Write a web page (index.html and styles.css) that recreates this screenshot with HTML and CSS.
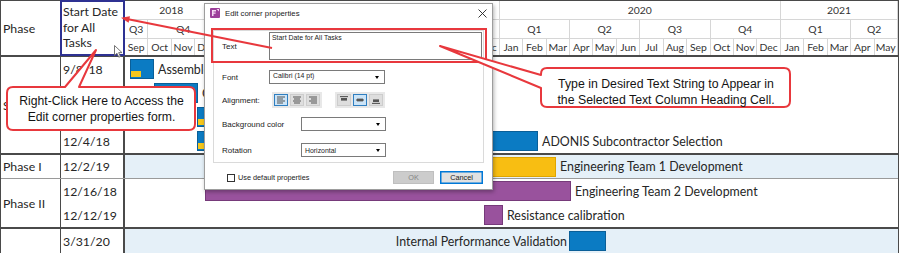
FILE: index.html
```html
<!DOCTYPE html>
<html>
<head>
<meta charset="utf-8">
<title>Edit corner properties</title>
<link rel="stylesheet" href="styles.css">
</head>
<body>
<div class="stage">
  <div class="chart">
    <div class="row head">
      <div class="cphase hphase">Phase</div>
      <div class="cdate hdate">Start Date<br>for All<br>Tasks</div>
      <div class="tlhead">
        <div class="yr s4">2018</div><div class="yr s12">2019</div><div class="yr s12">2020</div><div class="yr s5">2021</div>
        <div class="qt s1">Q3</div><div class="qt s3">Q4</div>
        <div class="qt s3">Q1</div><div class="qt s3">Q2</div><div class="qt s3">Q3</div><div class="qt s3">Q4</div>
        <div class="qt s3">Q1</div><div class="qt s3">Q2</div><div class="qt s3">Q3</div><div class="qt s3">Q4</div>
        <div class="qt s3">Q1</div><div class="qt s2">Q2</div>
        <div class="mo">Sep</div><div class="mo">Oct</div><div class="mo">Nov</div><div class="mo">Dec</div>
        <div class="mo">Jan</div><div class="mo">Feb</div><div class="mo">Mar</div><div class="mo">Apr</div><div class="mo">May</div><div class="mo">Jun</div>
        <div class="mo">Jul</div><div class="mo">Aug</div><div class="mo">Sep</div><div class="mo">Oct</div><div class="mo">Nov</div><div class="mo">Dec</div>
        <div class="mo">Jan</div><div class="mo">Feb</div><div class="mo">Mar</div><div class="mo">Apr</div><div class="mo">May</div><div class="mo">Jun</div>
        <div class="mo">Jul</div><div class="mo">Aug</div><div class="mo">Sep</div><div class="mo">Oct</div><div class="mo">Nov</div><div class="mo">Dec</div>
        <div class="mo">Jan</div><div class="mo">Feb</div><div class="mo">Mar</div><div class="mo">Apr</div><div class="mo">May</div>
      </div>
    </div>

    <div class="row grp g1">
      <div class="cphase">Startup</div>
      <div class="cdate">
        <div class="d">9/8/18</div><div class="d">10/1/18</div><div class="d">12/3/18</div><div class="d">12/4/18</div>
      </div>
      <div class="tl">
        <div class="sub"><div class="bar blue" style="margin-left:5px;width:24px"><div class="prog" style="width:10px"></div></div><span class="lab">Assemble Engineering Team</span></div>
        <div class="sub"><div class="bar blue" style="margin-left:29px;width:44px"><div class="prog" style="width:12px"></div></div><span class="lab">Concept Design Review</span></div>
        <div class="sub"><div class="bar blue" style="margin-left:72px;width:120px"><div class="prog" style="width:60px"></div></div><span class="lab">Requirements Review</span></div>
        <div class="sub"><div class="bar blue" style="margin-left:72px;width:341px"><div class="prog" style="width:80px"></div></div><span class="lab">ADONIS Subcontractor Selection</span></div>
      </div>
    </div>

    <div class="row grp g2">
      <div class="cphase">Phase I</div>
      <div class="cdate"><div class="d d23">12/2/19</div></div>
      <div class="tl shade">
        <div class="sub s23"><div class="bar yellow" style="margin-left:175px;width:256px"></div><span class="lab">Engineering Team 1 Development</span></div>
      </div>
    </div>

    <div class="row grp g3">
      <div class="cphase">Phase II</div>
      <div class="cdate"><div class="d">12/16/18</div><div class="d">12/12/19</div></div>
      <div class="tl">
        <div class="sub"><div class="bar purple" style="margin-left:80px;width:366px"></div><span class="lab">Engineering Team 2 Development</span></div>
        <div class="sub"><div class="bar purple" style="margin-left:359px;width:19px"></div><span class="lab">Resistance calibration</span></div>
      </div>
    </div>

    <div class="row grp g4">
      <div class="cphase"></div>
      <div class="cdate"><div class="d">3/31/20</div></div>
      <div class="tl shade">
        <div class="sub"><div class="lead" style="width:444px">Internal Performance Validation</div><div class="bar blue" style="width:37px"></div></div>
      </div>
    </div>
  </div>

  <div class="dialog">
    <div class="titlebar">
      <svg class="app-icon" viewBox="0 0 10 10" width="10" height="10"><rect x="0" y="0" width="10" height="10" rx="1" fill="#9c3f9a"/><path d="M2 2 H6 V3.4 H3.5 V4.4 H5.6 V5.7 H3.5 V8 H2 Z" fill="#f4d9f2"/><path d="M6.5 1 L9 1 L9 3.5 Z" fill="#f4d9f2"/></svg>
      <span class="title">Edit corner properties</span>
      <svg class="close" viewBox="0 0 9 9" width="9" height="9"><path d="M0.5 0.5 L8.5 8.5 M8.5 0.5 L0.5 8.5" stroke="#222" stroke-width="0.9"/></svg>
    </div>
    <div class="groupbox">
      <div class="frow">
        <div class="flabel">Text</div>
        <div class="textarea">Start Date for All Tasks</div>
      </div>
      <div class="frow r-font">
        <div class="flabel">Font</div>
        <div class="combo wide"><span class="ctext top">Calibri (14 pt)</span><span class="arrow"></span></div>
      </div>
      <div class="frow r-align">
        <div class="flabel">Alignment:</div>
        <div class="align">
          <div class="agroup">
            <div class="abtn sel"><svg viewBox="0 0 8 8" width="8" height="8"><path d="M0 1H8M0 3H6M0 5H8M0 7H6" stroke="#555" stroke-width="1.2"/></svg></div>
            <div class="abtn"><svg viewBox="0 0 8 8" width="8" height="8"><path d="M0 1H8M1 3H7M0 5H8M1 7H7" stroke="#555" stroke-width="1.2"/></svg></div>
            <div class="abtn"><svg viewBox="0 0 8 8" width="8" height="8"><path d="M0 1H8M2 3H8M0 5H8M2 7H8" stroke="#555" stroke-width="1.2"/></svg></div>
          </div>
          <div class="agroup">
            <div class="abtn"><svg viewBox="0 0 8 8" width="8" height="8"><path d="M0 0.6H8" stroke="#555" stroke-width="1.1"/><rect x="1" y="2" width="6" height="2.6" fill="#555"/></svg></div>
            <div class="abtn sel"><svg viewBox="0 0 8 8" width="8" height="8"><path d="M0 4H8" stroke="#555" stroke-width="1.1"/><rect x="1" y="2.6" width="6" height="2.8" fill="#555"/></svg></div>
            <div class="abtn"><svg viewBox="0 0 8 8" width="8" height="8"><path d="M0 7.4H8" stroke="#555" stroke-width="1.1"/><rect x="1" y="3.4" width="6" height="2.6" fill="#555"/></svg></div>
          </div>
        </div>
      </div>
      <div class="frow r-bg">
        <div class="flabel">Background color</div>
        <div class="combo narrow"><span class="ctext"></span><span class="arrow"></span></div>
      </div>
      <div class="frow r-rot">
        <div class="flabel">Rotation</div>
        <div class="combo narrow"><span class="ctext">Horizontal</span><span class="arrow"></span></div>
      </div>
    </div>
    <div class="footer">
      <span class="chk"></span>
      <span class="chk-label">Use default properties</span>
      <div class="btn ok">OK</div>
      <div class="btn cancel">Cancel</div>
    </div>
  </div>

  <svg class="overlay" width="900" height="253" viewBox="0 0 900 253">
    <rect x="212" y="29" width="274" height="33" fill="none" stroke="#e8383d" stroke-width="2"/>
    <line x1="127" y1="19" x2="272" y2="48" stroke="#e8383d" stroke-width="2"/>
    <polygon points="121,17.8 130,16.2 128.6,22.8" fill="#e8383d"/>
    <path d="M13 87 L65 87 L96 50 L79 87 L189 87 Q195 87 195 93 L195 124 Q195 130 189 130 L13 130 Q7 130 7 124 L7 93 Q7 87 13 87 Z" fill="#fff" stroke="#e8383d" stroke-width="2" stroke-linejoin="round"/>
    <path d="M547 68 L784 68 Q790 68 790 74 L790 101 Q790 107 784 107 L547 107 Q541 107 541 101 L541 88 L440 46 L541 75 L541 74 Q541 68 547 68 Z" fill="#fff" stroke="#e8383d" stroke-width="2" stroke-linejoin="round"/>
  </svg>
  <div class="ctext1">Right-Click Here to Access the<br>Edit corner properties form.</div>
  <div class="ctext2">Type in Desired Text String to Appear in<br>the Selected Text Column Heading Cell.</div>
  <svg class="cursor" viewBox="0 0 9 13" width="9" height="13"><path d="M0.5 0.5 L0.5 10.5 L3 8.2 L4.8 12.2 L6.4 11.5 L4.7 7.6 L8 7.6 Z" fill="#fff" stroke="#666" stroke-width="0.9" stroke-linejoin="round"/></svg>
</div>
</body>
</html>
```

FILE: styles.css
```css
* { box-sizing: border-box; }
html, body { margin: 0; padding: 0; }
body {
  width: 900px;
  height: 253px;
  overflow: hidden;
  background: #fff;
  font-family: "Lato", "Liberation Sans", sans-serif;
  color: #262626;
}
.stage {
  position: relative;
  width: 900px;
  height: 253px;
  overflow: hidden;
}

/* ---------- chart ---------- */
.chart {
  width: 899px;
  height: 253px;
  border: 1px solid #4a4a4a;
  border-bottom: 0;
}
.row {
  display: grid;
  grid-template-columns: 60px 64px 773px;
}
.cphase {
  border-right: 1px solid #4a4a4a;
  display: flex;
  align-items: center;
  padding-left: 2px;
  font-size: 12.3px;
  white-space: nowrap;
  overflow: hidden;
}
.cdate {
  border-right: 2px solid #4a4a4a;
  font-size: 12.3px;
}
.head {
  height: 56px;
  border-bottom: 2px solid #4a4a4a;
}
.hdate {
  position: relative;
  padding: 3px 0 0 2px;
  line-height: 15.5px;
}
.hdate::after {
  content: "";
  position: absolute;
  top: -1px;
  left: -1px;
  right: -2px;
  bottom: -1px;
  border: 2px solid #2e3192;
}
.tlhead {
  display: grid;
  grid-template-columns: repeat(33, 1fr);
  grid-template-rows: 19px 19px 16px;
  font-size: 10.4px;
  color: #333;
}
.yr, .qt, .mo {
  display: flex;
  align-items: center;
  justify-content: center;
  border-right: 1px solid #d6d6d6;
  white-space: nowrap;
  overflow: hidden;
}
.yr, .qt { border-bottom: 1px solid #d6d6d6; }
.s1 { grid-column: span 1; }
.s2 { grid-column: span 2; }
.s3 { grid-column: span 3; }
.s4 { grid-column: span 4; }
.s5 { grid-column: span 5; }
.s12 { grid-column: span 12; }

.grp { border-bottom: 2px solid #4a4a4a; }
.g2 { border-bottom: 1px solid #9a9a9a; }
.g4 { border-bottom: 0; height: 25px; }
.d {
  height: 24px;
  display: flex;
  align-items: center;
  padding-left: 2px;
}
.d23 { height: 23px; }
.tl { overflow: hidden; }
.shade { background: #e5f0f8; }
.sub {
  height: 24px;
  display: flex;
  align-items: center;
  white-space: nowrap;
  font-size: 12.4px;
}
.s23 { height: 23px; }
.bar {
  flex: none;
  height: 20px;
  border: 1px solid;
  display: flex;
  align-items: flex-end;
  padding: 0 0 1px 0;
}
.blue { background: #0b7bc3; border-color: #0a5f98; }
.yellow { background: #f8be12; border-color: #dfa500; }
.purple { background: #99529d; border-color: #763a7a; }
.prog {
  height: 6px;
  background: #f7c71c;
}
.lab { margin-left: 4px; }
.lead {
  flex: none;
  text-align: right;
  padding-right: 2px;
}

/* ---------- dialog ---------- */
.dialog {
  position: absolute;
  left: 204px;
  top: 3px;
  width: 289px;
  height: 187px;
  background: #fff;
  border: 1px solid #9d9d9d;
  box-shadow: 1px 2px 4px rgba(0, 0, 0, 0.3);
  font-family: "Liberation Sans", Arial, sans-serif;
  color: #1b1b1b;
}
.titlebar {
  height: 18px;
  display: flex;
  align-items: center;
  padding-left: 5px;
}
.app-icon { flex: none; margin-right: 5px; }
.title { flex: 1; font-size: 7.8px; }
.close { flex: none; margin-right: 5px; }
.groupbox {
  margin: 8px 8px 0 8px;
  height: 133px;
  border: 1px solid #dadada;
  padding: 1px 1px 0 8px;
}
.frow {
  display: flex;
  align-items: center;
}
.flabel {
  flex: none;
  width: 47px;
  white-space: nowrap;
  font-size: 8px;
}
.textarea {
  width: 213px;
  height: 28px;
  border: 1px solid #7a7a7a;
  font-size: 6.9px;
  padding: 1px 2px;
}
.r-font { margin-top: 10px; }
.r-align { margin-top: 8px; }
.r-bg { margin-top: 9px; }
.r-rot { margin-top: 12px; }
.combo {
  height: 14px;
  border: 1px solid #7a7a7a;
  display: flex;
  align-items: center;
  padding-left: 3px;
  font-size: 6.9px;
}
.combo.wide { width: 116px; }
.combo.narrow { width: 85px; margin-left: 32px; }
.ctext.top { align-self: flex-start; margin-top: 1px; }
.arrow {
  margin-left: auto;
  margin-right: 5px;
  width: 0;
  height: 0;
  border-left: 2.5px solid transparent;
  border-right: 2.5px solid transparent;
  border-top: 3px solid #000;
}
.align {
  display: flex;
  gap: 13px;
  margin-left: 3px;
}
.agroup {
  display: flex;
  gap: 2px;
  padding: 2px;
  background: #e8e8e8;
  height: 16px;
}
.abtn {
  width: 14px;
  height: 12px;
  background: #dedede;
  border: 1px solid #cdcdcd;
  display: flex;
  align-items: center;
  justify-content: center;
}
.abtn.sel { background: #cce4f7; border-color: #2f7fc1; }
.footer {
  display: flex;
  align-items: center;
  margin-top: 8px;
  height: 13px;
  padding: 0 9px 0 22px;
}
.chk {
  flex: none;
  width: 8px;
  height: 8px;
  border: 1px solid #333;
  margin-right: 3px;
}
.chk-label { flex: 1; font-size: 7.3px; }
.btn {
  height: 13px;
  font-size: 7.3px;
  display: flex;
  align-items: center;
  justify-content: center;
}
.ok {
  width: 41px;
  margin-right: 6px;
  background: #cccccc;
  border: 1px solid #bfbfbf;
  color: #858585;
}
.cancel {
  width: 43px;
  background: #e1e1e1;
  border: 1px solid #0078d7;
  box-shadow: inset 0 0 0 0.5px #0078d7;
}

/* ---------- annotations ---------- */
.overlay {
  position: absolute;
  left: 0;
  top: 0;
}
.ctext1, .ctext2 {
  position: absolute;
  display: flex;
  align-items: center;
  justify-content: center;
  text-align: center;
  font-family: "Liberation Sans", Arial, sans-serif;
  color: #141414;
  white-space: nowrap;
}
.ctext1 {
  left: 7px;
  top: 87px;
  width: 189px;
  height: 44px;
  font-size: 12.2px;
  line-height: 16px;
}
.ctext2 {
  left: 541px;
  top: 72px;
  width: 250px;
  height: 41px;
  font-size: 12.3px;
  line-height: 15.5px;
}
.cursor {
  position: absolute;
  left: 114px;
  top: 45px;
}
```
